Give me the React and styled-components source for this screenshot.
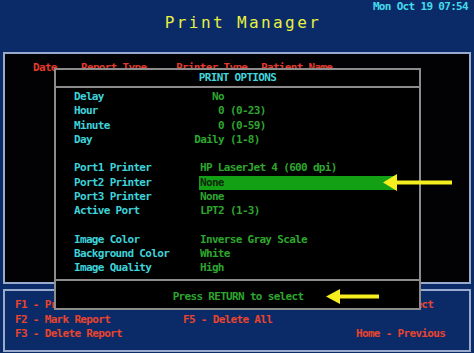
import React from "react";
import styled, { createGlobalStyle } from "styled-components";

const Global = createGlobalStyle`
  html, body { margin: 0; padding: 0; background: #0a2b67; }
  body { font-family: "DejaVu Sans Mono", "Liberation Mono", monospace; }
`;

const Screen = styled.div`
  position: relative;
  width: 474px;
  height: 353px;
  box-sizing: border-box;
  padding: 0 3px;
  background: #0a2b67;
  display: flex;
  flex-direction: column;
  overflow: hidden;
  font-size: 11px;
  font-weight: bold;
  letter-spacing: -0.68px;
  line-height: 14px;
`;

const Header = styled.header`
  height: 52px;
  flex: none;
  display: flex;
  flex-direction: column;
`;

const Clock = styled.div`
  align-self: flex-end;
  margin-right: 3px;
  height: 13px;
  color: #44dcec;
`;

const Title = styled.h1`
  margin: 0;
  text-align: center;
  font-size: 16px;
  font-weight: normal;
  letter-spacing: 2.4px;
  line-height: 20px;
  color: #e8f040;
  padding-left: 12px;
`;

const MainPanel = styled.section`
  height: 232px;
  flex: none;
  box-sizing: border-box;
  border: 2px solid #9aaacc;
  background: #020204;
  padding: 7px 0 0 28px;
`;

const ColumnHead = styled.div`
  display: grid;
  grid-template-columns: 48px 95px 85px auto;
  color: #e23a2c;
`;

const KeyPanel = styled.section`
  margin-top: 5px;
  height: 63px;
  flex: none;
  box-sizing: border-box;
  border: 2px solid #9aaacc;
  background: #0a2b67;
  padding: 7px 0 0 10px;
  display: grid;
  grid-template-columns: 168px 173px auto;
  grid-auto-rows: 14.5px;
  color: #e8442e;
`;

const Key = styled.span`
  white-space: pre;
  line-height: 14.5px;
`;

const Popup = styled.div`
  position: absolute;
  left: 54px;
  top: 68px;
  width: 367px;
  height: 242px;
  box-sizing: border-box;
  border: 2px solid #8c8c8c;
  background: #000;
  display: flex;
  flex-direction: column;
`;

const PopupTitle = styled.div`
  height: 16px;
  flex: none;
  border-bottom: 2px solid #8c8c8c;
  text-align: center;
  line-height: 16px;
  color: #40d4dc;
`;

const Options = styled.div`
  flex: 1;
  padding: 2px 0 0 18px;
  display: grid;
  grid-template-columns: 120px 1fr;
  grid-auto-rows: 14.25px;
  align-content: start;
`;

const Label = styled.span`
  color: #3ed2da;
  line-height: 14.25px;
  white-space: pre;
`;

const Value = styled.span`
  color: ${(p) => (p.$selected ? "#0e2a0e" : "#2ea62e")};
  background: ${(p) => (p.$selected ? "#14a014" : "transparent")};
  line-height: 14.25px;
  white-space: pre;
  padding-left: ${(p) => (p.$ranged ? "0" : "1px")};
  margin-left: ${(p) => (p.$ranged ? "0" : "5px")};
  width: ${(p) => (p.$selected ? "197px" : "auto")};
`;

const Field = styled.span`
  display: inline-block;
  width: 30px;
  text-align: right;
`;

const Range = styled.span`
  margin-left: 6px;
`;

const Spacer = styled.div`
  grid-column: 1 / -1;
`;

const PopupFooter = styled.div`
  height: 27px;
  flex: none;
  border-top: 2px solid #8c8c8c;
  text-align: center;
  line-height: 27px;
  color: #2ea62e;
`;

const FooterText = styled.span`
  position: relative;
  top: 2px;
  padding-left: 1px;
`;

const Pointer = styled.svg`
  position: absolute;
  left: ${(p) => p.$x}px;
  top: ${(p) => p.$y}px;
`;

function Arrow({ x, y, length, head, height }) {
  const mid = height / 2;
  return (
    <Pointer $x={x} $y={y} width={length} height={height} viewBox={`0 0 ${length} ${height}`}>
      <polygon
        points={`0,${mid} ${head},0 ${head},${mid - 2} ${length},${mid - 2} ${length},${mid + 2} ${head},${mid + 2} ${head},${height}`}
        fill="#f6ee1e"
      />
    </Pointer>
  );
}

const options = [
  { label: "Delay", field: "No", range: "" },
  { label: "Hour", field: "0", range: "(0-23)" },
  { label: "Minute", field: "0", range: "(0-59)" },
  { label: "Day", field: "Daily", range: "(1-8)" },
  null,
  { label: "Port1 Printer", value: "HP LaserJet 4 (600 dpi)" },
  { label: "Port2 Printer", value: "None", selected: true },
  { label: "Port3 Printer", value: "None" },
  { label: "Active Port", field: "LPT2", range: "(1-3)" },
  null,
  { label: "Image Color", value: "Inverse Gray Scale" },
  { label: "Background Color", value: "White" },
  { label: "Image Quality", value: "High" },
];

const keys = [
  ["F1 - Print Report", "F4 - Print All", "PgDn - Select"],
  ["F2 - Mark Report", "F5 - Delete All", ""],
  ["F3 - Delete Report", "", "Home - Previous"],
];

export default function App() {
  return (
    <>
      <Global />
      <Screen>
        <Header>
          <Clock>Mon Oct 19 07:54</Clock>
          <Title>Print Manager</Title>
        </Header>
        <MainPanel>
          <ColumnHead>
            <span>Date</span>
            <span>Report Type</span>
            <span>Printer Type</span>
            <span>Patient Name</span>
          </ColumnHead>
        </MainPanel>
        <KeyPanel>
          {keys.flat().map((k, i) => (
            <Key key={i}>{k}</Key>
          ))}
        </KeyPanel>

        <Popup>
          <PopupTitle>PRINT OPTIONS</PopupTitle>
          <Options>
            {options.map((o, i) =>
              o === null ? (
                <Spacer key={i} />
              ) : (
                <React.Fragment key={i}>
                  <Label>{o.label}</Label>
                  {o.field !== undefined ? (
                    <Value $ranged>
                      <Field>{o.field}</Field>
                      {o.range && <Range>{o.range}</Range>}
                    </Value>
                  ) : (
                    <Value $selected={o.selected}>{o.value}</Value>
                  )}
                </React.Fragment>
              )
            )}
          </Options>
          <PopupFooter>
            <FooterText>Press RETURN to select</FooterText>
          </PopupFooter>
        </Popup>

        <Arrow x={383} y={174} length={69} head={14} height={17} />
        <Arrow x={326} y={289} length={53} head={14} height={15} />
      </Screen>
    </>
  );
}
